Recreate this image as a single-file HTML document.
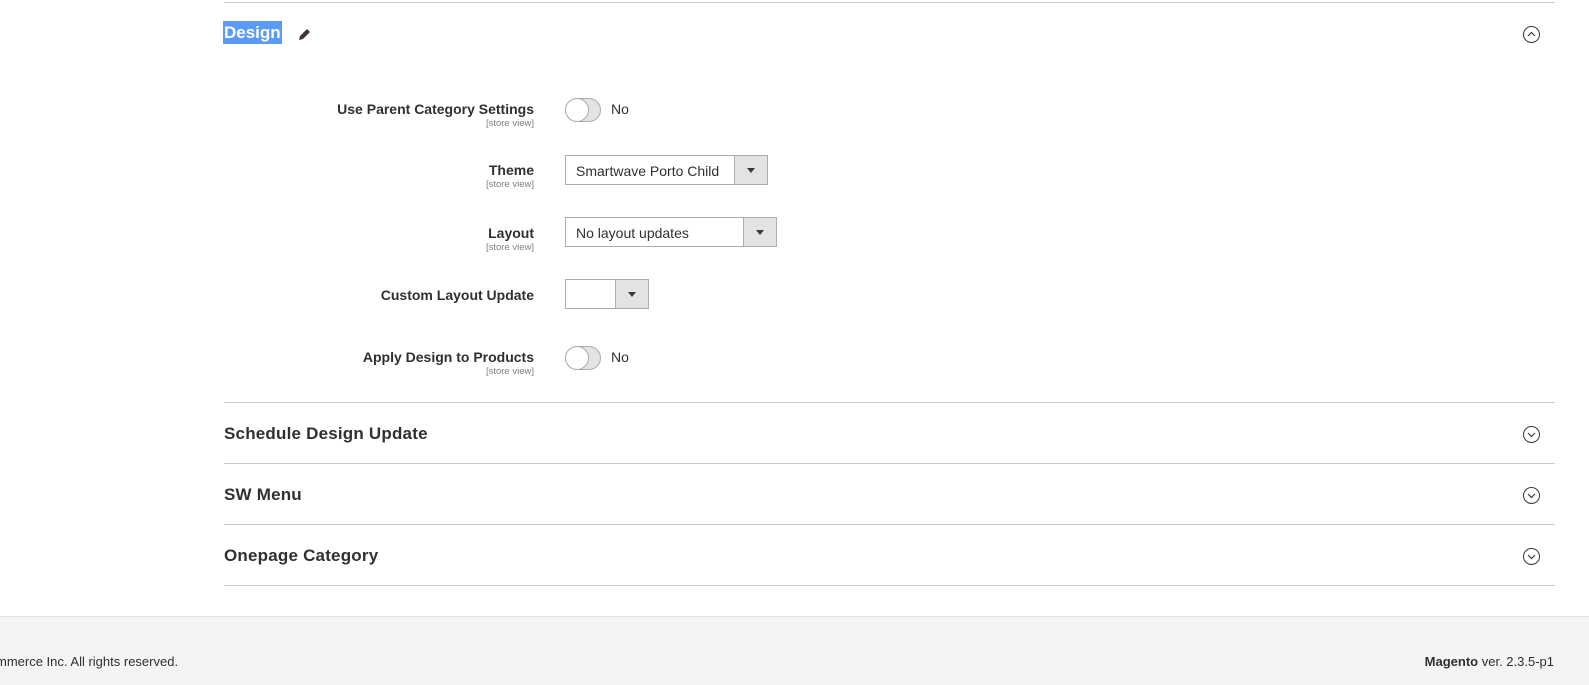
<!DOCTYPE html>
<html><head><style>
body{margin:0;width:1589px;height:684px;background:#fff;font-family:"Liberation Sans",sans-serif;color:#303030;position:relative;overflow:hidden}
.a{position:absolute}
.line{position:absolute;left:224px;width:1331px;height:1px;background:#ccc}
.lbl{position:absolute;right:1055px;text-align:right;font-size:14px;font-weight:bold;color:#303030;white-space:nowrap}
.lbl small{display:block;font-size:9.5px;font-weight:normal;color:#808080;margin-top:1px}
.tog{position:absolute;left:565px;width:34px;height:22px;border:1px solid #adadad;border-radius:12px;background:#e3e3e3}
.tog:before{content:"";position:absolute;left:-1px;top:-1px;width:22px;height:22px;border:1px solid #adadad;border-radius:50%;background:#fff}
.no{position:absolute;left:611px;font-size:14px}
.sel{position:absolute;left:565px;height:30px;border:1px solid #adadad;background:#fff;font-size:14px;line-height:30px;box-sizing:border-box}
.sel span{padding-left:10px}
.sel i{position:absolute;right:0;top:0;width:32px;height:28px;background:#e3e3e3;border-left:1px solid #adadad}
.sel i:after{content:"";position:absolute;left:12px;top:12px;border:4px solid transparent;border-top:5px solid #41362f}
.st{position:absolute;left:224px;font-size:17px;font-weight:bold;color:#303030;letter-spacing:.2px}
.ic{position:absolute;left:1523px;width:17px;height:17px;border:1px solid #41362f;border-radius:50%;box-sizing:border-box}
</style></head><body>
<div class="line" style="top:2px"></div>
<div class="a" style="left:223px;top:21px;height:23px;background:#5b9bf7;color:#fff;font-size:17px;font-weight:bold;line-height:23px;padding:0 1px">Design</div>
<svg class="a" style="left:298px;top:27px" width="14" height="14" viewBox="0 0 14 14"><path d="M1 13l1-4 7-7 3 3-7 7z" fill="#41362f"/></svg>
<div class="ic" style="top:26px"><svg width="15" height="15" viewBox="0 0 15 15"><path d="M4 9l3.5-3.5L11 9" fill="none" stroke="#41362f" stroke-width="1.2"/></svg></div>

<div class="lbl" style="top:101px">Use Parent Category Settings<small>[store view]</small></div>
<div class="tog" style="top:98px"></div><div class="no" style="top:101px">No</div>

<div class="lbl" style="top:162px">Theme<small>[store view]</small></div>
<div class="sel" style="top:155px;width:203px"><span>Smartwave Porto Child</span><i></i></div>

<div class="lbl" style="top:225px">Layout<small>[store view]</small></div>
<div class="sel" style="top:217px;width:212px"><span>No layout updates</span><i></i></div>

<div class="lbl" style="top:287px">Custom Layout Update</div>
<div class="sel" style="top:279px;width:84px"><i></i></div>

<div class="lbl" style="top:349px">Apply Design to Products<small>[store view]</small></div>
<div class="tog" style="top:346px"></div><div class="no" style="top:349px">No</div>

<div class="line" style="top:402px"></div>
<div class="st" style="top:424px">Schedule Design Update</div>
<div class="ic" style="top:426px"><svg width="15" height="15" viewBox="0 0 15 15"><path d="M4 6l3.5 3.5L11 6" fill="none" stroke="#41362f" stroke-width="1.2"/></svg></div>
<div class="line" style="top:463px"></div>
<div class="st" style="top:485px">SW Menu</div>
<div class="ic" style="top:487px"><svg width="15" height="15" viewBox="0 0 15 15"><path d="M4 6l3.5 3.5L11 6" fill="none" stroke="#41362f" stroke-width="1.2"/></svg></div>
<div class="line" style="top:524px"></div>
<div class="st" style="top:546px">Onepage Category</div>
<div class="ic" style="top:548px"><svg width="15" height="15" viewBox="0 0 15 15"><path d="M4 6l3.5 3.5L11 6" fill="none" stroke="#41362f" stroke-width="1.2"/></svg></div>
<div class="line" style="top:585px"></div>

<div class="a" style="left:0;top:616px;width:1589px;height:68px;background:#f4f4f4;border-top:1px solid #e3e3e3"></div>
<div class="a" style="left:-4px;top:654px;font-size:13px;color:#303030">mmerce Inc. All rights reserved.</div>
<div class="a" style="right:35px;top:654px;font-size:13px;color:#303030"><b>Magento</b> ver. 2.3.5-p1</div>
</body></html>
